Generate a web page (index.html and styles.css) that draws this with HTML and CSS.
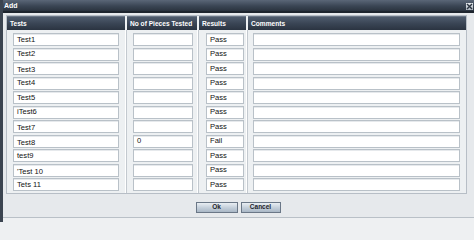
FILE: index.html
```html
<!DOCTYPE html>
<html>
<head>
<meta charset="utf-8">
<link rel="stylesheet" href="styles.css">
</head>
<body>
<div class="dialog">
  <div class="titlebar">
    <span class="title">Add</span>
    <span class="close"><svg width="7" height="7" viewBox="0 0 7 7"><path d="M1 1L6 6M6 1L1 6" stroke="#2b3440" stroke-width="1.4"/></svg></span>
  </div>
  <div class="body">
    <div class="panel">
      <div class="grid">
        <div class="hd c1">Tests</div>
        <div class="hd c2">No of Pieces Tested</div>
        <div class="hd c3">Results</div>
        <div class="hd c4">Comments</div>

        <div class="col c1">
          <div class="inp">Test1</div>
          <div class="inp">Test2</div>
          <div class="inp low">Test3</div>
          <div class="inp">Test4</div>
          <div class="inp">Test5</div>
          <div class="inp">iTest6</div>
          <div class="inp low">Test7</div>
          <div class="inp low">Test8</div>
          <div class="inp">test9</div>
          <div class="inp low">'Test 10</div>
          <div class="inp">Tets 11</div>
        </div>
        <div class="col c2">
          <div class="inp"></div>
          <div class="inp"></div>
          <div class="inp"></div>
          <div class="inp"></div>
          <div class="inp"></div>
          <div class="inp"></div>
          <div class="inp"></div>
          <div class="inp">0</div>
          <div class="inp"></div>
          <div class="inp"></div>
          <div class="inp"></div>
        </div>
        <div class="col c3">
          <div class="inp">Pass</div>
          <div class="inp">Pass</div>
          <div class="inp">Pass</div>
          <div class="inp">Pass</div>
          <div class="inp">Pass</div>
          <div class="inp">Pass</div>
          <div class="inp">Pass</div>
          <div class="inp">Fail</div>
          <div class="inp">Pass</div>
          <div class="inp">Pass</div>
          <div class="inp">Pass</div>
        </div>
        <div class="col c4">
          <div class="inp"></div>
          <div class="inp"></div>
          <div class="inp"></div>
          <div class="inp"></div>
          <div class="inp"></div>
          <div class="inp"></div>
          <div class="inp"></div>
          <div class="inp"></div>
          <div class="inp"></div>
          <div class="inp"></div>
          <div class="inp"></div>
        </div>
      </div>
    </div>
    <div class="buttons">
      <button class="btn ok">Ok</button>
      <button class="btn cancel">Cancel</button>
    </div>
  </div>
  <div class="foot"></div>
</div>
</body>
</html>
```
FILE: styles.css
```css
html, body {
  margin: 0;
  padding: 0;
}
html {
  background: #eef0f2;
}
body {
  width: 474px;
  height: 222px;
  overflow: hidden;
  background: #e4e7ea;
  font-family: "Liberation Sans", Arial, sans-serif;
}
.dialog {
  width: 474px;
  height: 222px;
  display: flex;
  flex-direction: column;
  border-left: 3px solid #3b4450;
  box-sizing: border-box;
}
.titlebar {
  height: 11px;
  flex: none;
  background: linear-gradient(#5a6677, #3a4554 55%, #2a333e);
  border-bottom: 2px solid #1e252e;
  display: flex;
  align-items: center;
  justify-content: space-between;
  padding: 0 1px 0 1px;
}
.title {
  color: #ffffff;
  font-weight: bold;
  font-size: 7px;
}
.close {
  width: 7px;
  height: 7px;
  background: linear-gradient(#e6eaee, #a9b3bd);
  display: flex;
  margin-top: 1px;
}
.body {
  flex: 1;
  padding: 2px 6px 0 3px;
  display: flex;
  flex-direction: column;
  background: #e6e9ec;
}
.panel {
  width: 461px;
  height: 179px;
  box-sizing: border-box;
  border: 1px solid #b7bec6;
  background: #edf0f2;
}
.grid {
  display: grid;
  grid-template-columns: 120px 72px 49px 218px;
  grid-template-rows: 14px 1fr;
  height: 100%;
}
.hd {
  background: linear-gradient(#4f5c6d, #3a4555 50%, #2b3441);
  color: #ffffff;
  font-weight: bold;
  font-size: 6.6px;
  display: flex;
  align-items: center;
  padding-left: 3px;
  margin-right: 2px;
  border-top: 1px solid #6b7686;
}
.hd.c4 {
  margin-right: 0;
}
.col {
  display: flex;
  flex-direction: column;
  padding-top: 3px;
  gap: 1.5px;
  border-right: 1px solid #c3c9cf;
  box-shadow: inset -1px 0 0 #ffffff;
}
.col.c1 { padding-left: 6px; padding-right: 7px; }
.col.c2 { padding-left: 6px; padding-right: 5px; }
.col.c3 { padding-left: 7px; padding-right: 3px; }
.col.c4 { padding-left: 5px; padding-right: 6px; border-right: none; box-shadow: none; }
.inp {
  height: 13px;
  box-sizing: border-box;
  background: #ffffff;
  border: 1px solid #b9c1c8;
  box-shadow: inset 0 1px 0 #e6e9ec;
  font-size: 7.6px;
  color: #111111;
  padding-left: 3px;
  display: flex;
  align-items: center;
  line-height: 1;
}
.inp.low {
  align-items: flex-end;
  padding-bottom: 0;
}
.buttons {
  display: flex;
  justify-content: center;
  gap: 3px;
  padding-top: 8px;
  padding-left: 2px;
}
.btn {
  height: 11px;
  padding: 0;
  border: 1px solid #6a7787;
  background: linear-gradient(#e9eef3, #c5d0db 50%, #a9b7c6);
  font-family: "Liberation Sans", Arial, sans-serif;
  font-weight: bold;
  font-size: 6.5px;
  color: #1d232a;
  line-height: 1;
}
.ok { width: 42px; }
.cancel { width: 40px; }
.foot {
  height: 4px;
  flex: none;
  border-top: 1px solid #b9c0c7;
  background: #eef0f2;
}
```
